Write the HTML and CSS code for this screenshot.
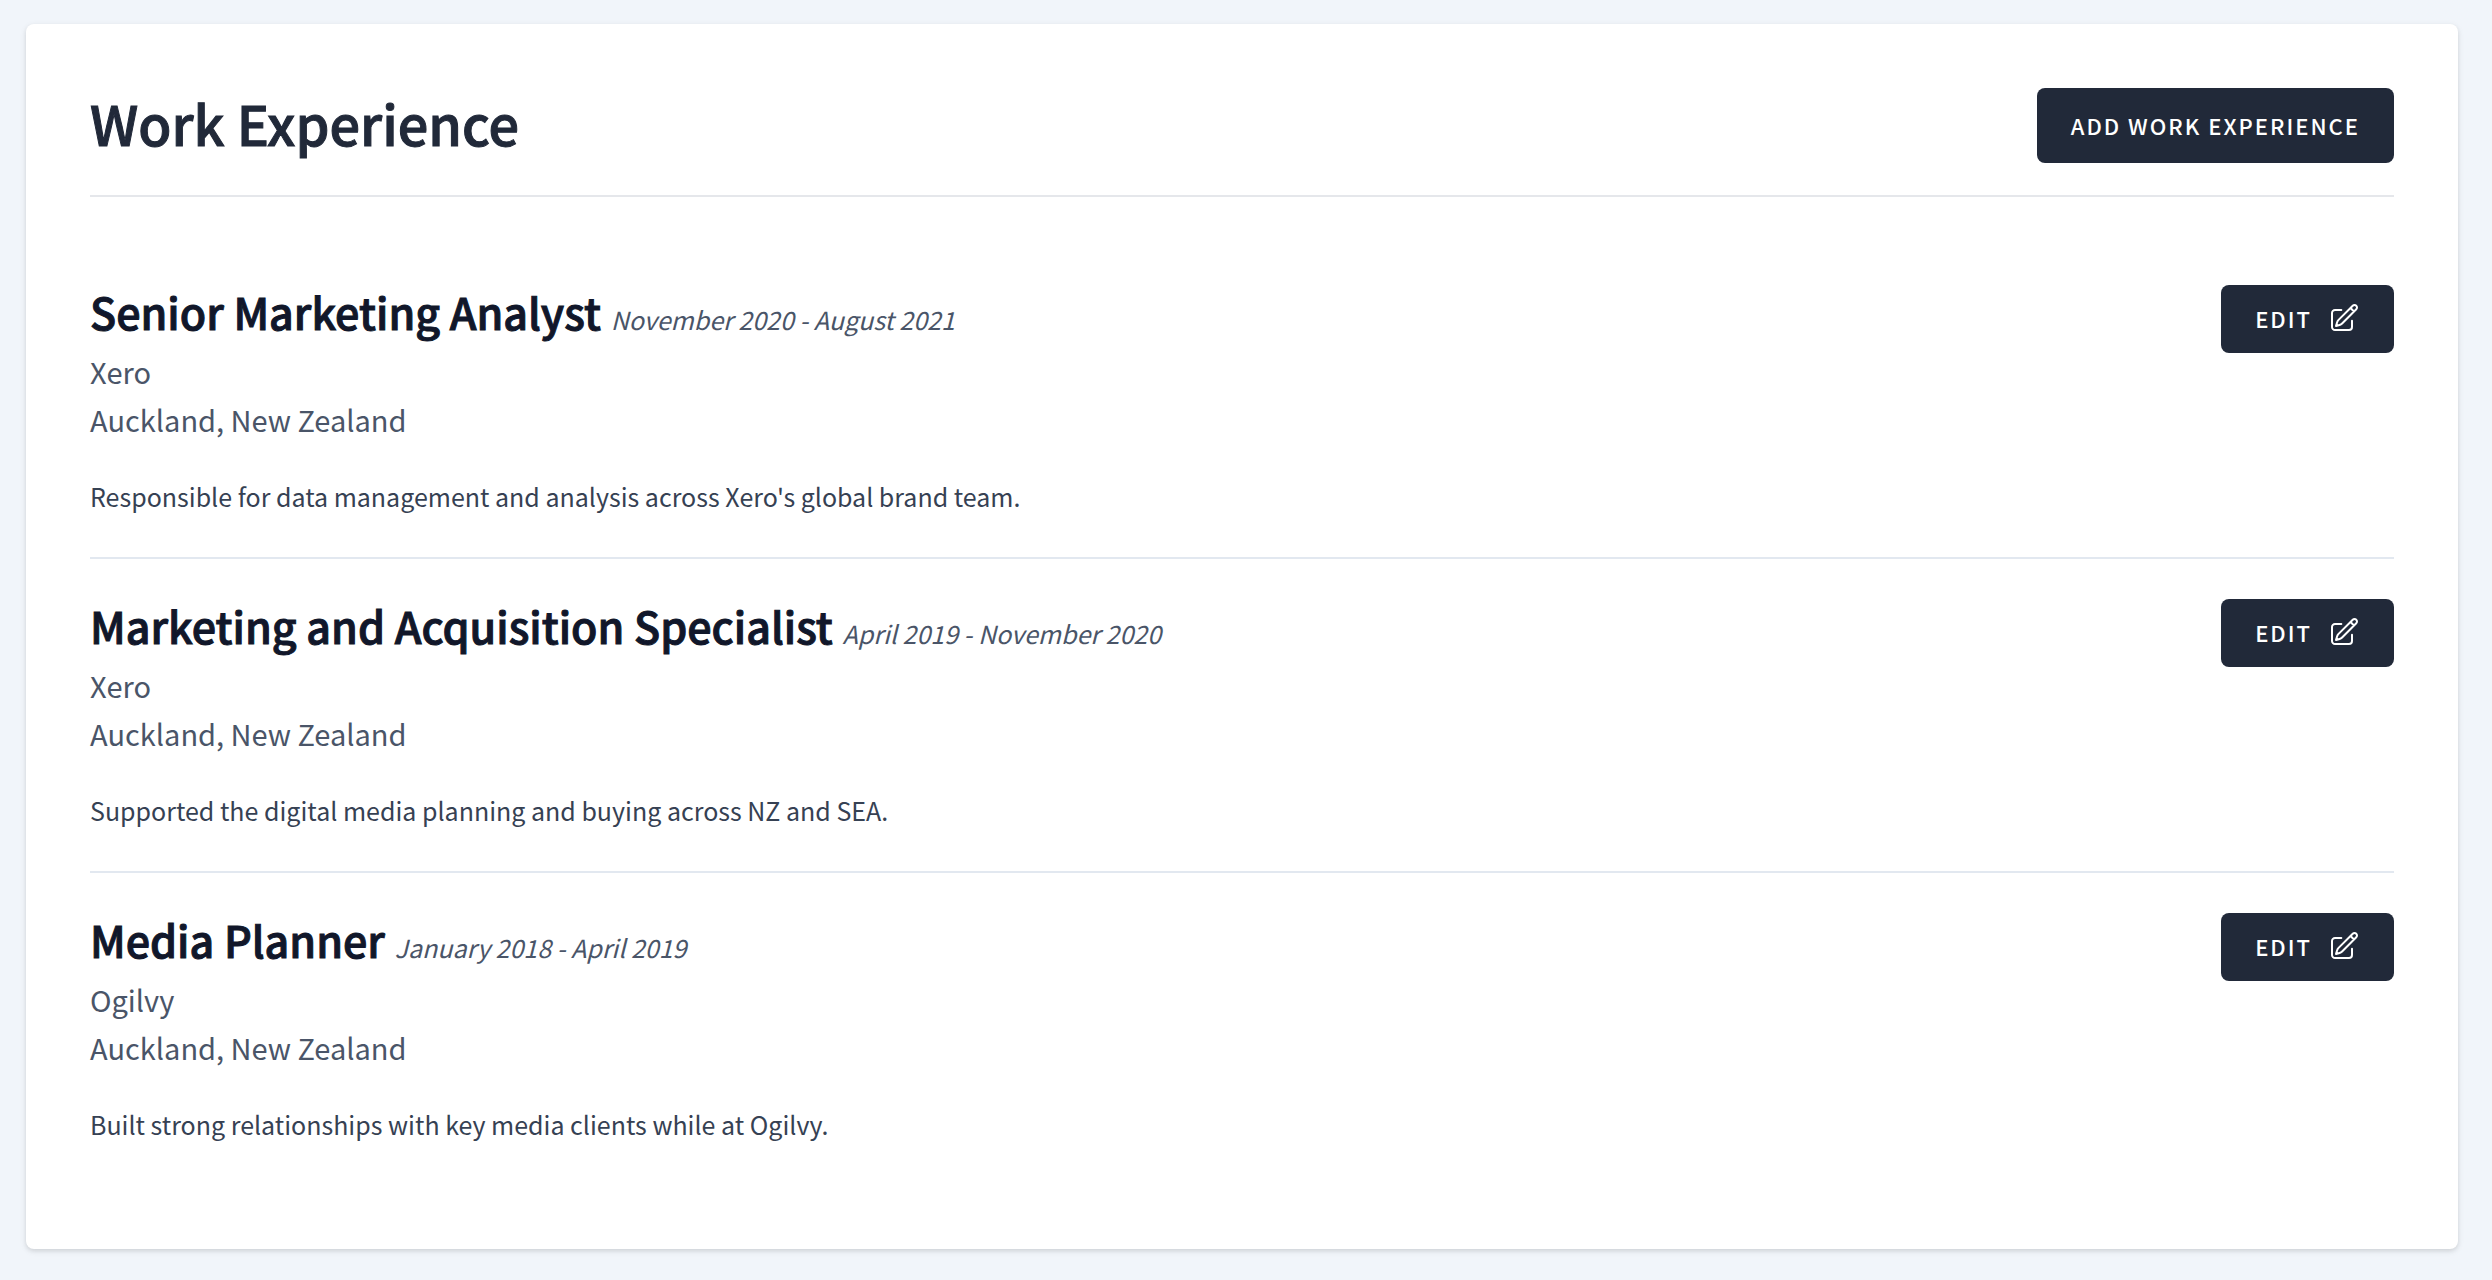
FILE: index.html
```html
<!DOCTYPE html>
<html lang="en">
<head>
<meta charset="utf-8">
<title>Work Experience</title>
<link rel="stylesheet" href="styles.css">
</head>
<body>
<main class="card">
  <header class="card-header">
    <h1 class="card-title">Work Experience</h1>
    <button class="button button-large" type="button">Add work experience</button>
  </header>
  <section class="job">
    <div class="job-info">
      <h2 class="job-title">Senior Marketing Analyst <em class="job-dates">November 2020 - August 2021</em></h2>
      <p class="job-meta">Xero</p>
      <p class="job-meta">Auckland, New Zealand</p>
      <p class="job-description">Responsible for data management and analysis across Xero's global brand team.</p>
    </div>
    <button class="button" type="button">Edit
      <svg class="icon" viewBox="0 0 24 24" aria-hidden="true"><path d="M16.862 4.487l1.687-1.688a1.875 1.875 0 112.652 2.652L10.582 16.07a4.5 4.5 0 01-1.897 1.13L6 18l.8-2.685a4.5 4.5 0 011.13-1.897l8.932-8.931zm0 0L19.5 7.125M18 14v4.75A2.25 2.25 0 0115.75 21H5.25A2.25 2.25 0 013 18.75V8.25A2.25 2.25 0 015.25 6H10"/></svg>
    </button>
  </section>
  <section class="job">
    <div class="job-info">
      <h2 class="job-title">Marketing and Acquisition Specialist <em class="job-dates">April 2019 - November 2020</em></h2>
      <p class="job-meta">Xero</p>
      <p class="job-meta">Auckland, New Zealand</p>
      <p class="job-description">Supported the digital media planning and buying across NZ and SEA.</p>
    </div>
    <button class="button" type="button">Edit
      <svg class="icon" viewBox="0 0 24 24" aria-hidden="true"><path d="M16.862 4.487l1.687-1.688a1.875 1.875 0 112.652 2.652L10.582 16.07a4.5 4.5 0 01-1.897 1.13L6 18l.8-2.685a4.5 4.5 0 011.13-1.897l8.932-8.931zm0 0L19.5 7.125M18 14v4.75A2.25 2.25 0 0115.75 21H5.25A2.25 2.25 0 013 18.75V8.25A2.25 2.25 0 015.25 6H10"/></svg>
    </button>
  </section>
  <section class="job">
    <div class="job-info">
      <h2 class="job-title">Media Planner <em class="job-dates">January 2018 - April 2019</em></h2>
      <p class="job-meta">Ogilvy</p>
      <p class="job-meta">Auckland, New Zealand</p>
      <p class="job-description">Built strong relationships with key media clients while at Ogilvy.</p>
    </div>
    <button class="button" type="button">Edit
      <svg class="icon" viewBox="0 0 24 24" aria-hidden="true"><path d="M16.862 4.487l1.687-1.688a1.875 1.875 0 112.652 2.652L10.582 16.07a4.5 4.5 0 01-1.897 1.13L6 18l.8-2.685a4.5 4.5 0 011.13-1.897l8.932-8.931zm0 0L19.5 7.125M18 14v4.75A2.25 2.25 0 0115.75 21H5.25A2.25 2.25 0 013 18.75V8.25A2.25 2.25 0 015.25 6H10"/></svg>
    </button>
  </section>
</main>
</body>
</html>
```
FILE: styles.css
```css
* { box-sizing: border-box; }
body {
  margin: 0;
  padding: 24px 34px 31px 26px;
  background: #f1f5fa;
  color: #364153;
  font-family: "Noto Sans CJK SC", "Noto Sans", sans-serif;
}
h1, h2, p { margin: 0; }
.card {
  padding: 64px;
  background: #fff;
  border-radius: 8px;
  box-shadow: 0 2px 6px rgba(0, 0, 0, 0.1), 0 2px 4px rgba(0, 0, 0, 0.06);
}
.card-header {
  display: flex;
  align-items: flex-start;
  justify-content: space-between;
  padding-bottom: 32px;
  margin-bottom: 48px;
  border-bottom: 2px solid #e5e7eb;
}
.card-title {
  color: #212939;
  font-size: 54px;
  line-height: 70px;
  font-weight: 500;
  -webkit-text-stroke: 1px currentColor;
}
.job {
  display: flex;
  align-items: flex-start;
  justify-content: space-between;
  padding: 40px 0;
}
.job + .job { border-top: 2px solid #e2e8f0; }
.job-title {
  margin-bottom: 10px;
  color: #11172a;
  font-size: 43px;
  line-height: 52px;
  font-weight: 500;
  -webkit-text-stroke: 1px currentColor;
}
.job-dates {
  color: #4a5568;
  font-size: 25px;
  line-height: 1;
  font-weight: 400;
  -webkit-text-stroke: 0;
}
.job-meta { color: #4a5568; font-size: 29px; line-height: 48px; }
.job-description { margin-top: 32px; font-size: 25px; line-height: 42px; }
.button {
  display: flex;
  align-items: center;
  gap: 16px;
  height: 68px;
  padding: 0 34px 2px;
  border: 0;
  border-radius: 8px;
  background: #212939;
  color: #fff;
  font: 500 22px/32px "Noto Sans CJK SC", "Noto Sans", sans-serif;
  letter-spacing: 2px;
  text-transform: uppercase;
}
.button-large { height: 75px; }
.icon {
  width: 32px;
  height: 32px;
  fill: none;
  stroke: currentColor;
  stroke-width: 1.5;
  stroke-linecap: round;
  stroke-linejoin: round;
}
```
